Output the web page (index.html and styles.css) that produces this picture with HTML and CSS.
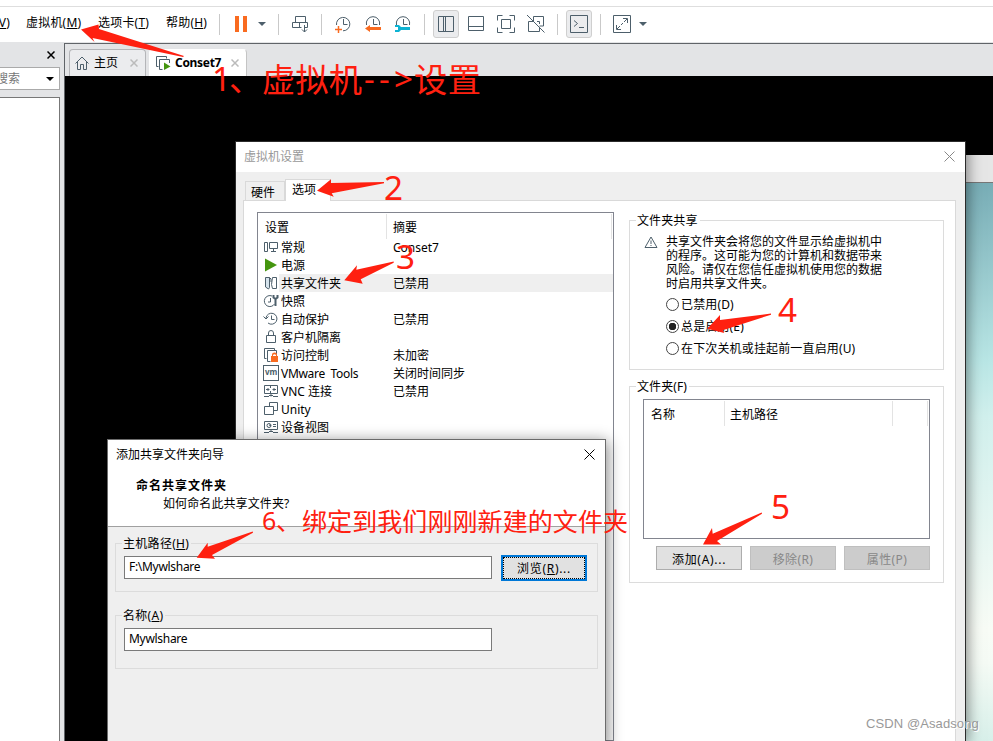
FILE: index.html
```html
<!DOCTYPE html>
<html lang="zh-CN">
<head>
    <meta charset="UTF-8">
    <meta name="viewport" content="width=device-width, initial-scale=1.0">
    <title>虚拟机设置</title>
    <link rel="stylesheet" href="styles.css">
</head>
<body>
    <div class="app">
        <div class="toolbar">
            <div class="menu">
                <span class="menu-view">(<u>V</u>)</span>
                <span class="menu-vm">虚拟机(<u>M</u>)</span>
                <span class="menu-tabs">选项卡(<u>T</u>)</span>
                <span class="menu-help">帮助(<u>H</u>)</span>
            </div>
            <div class="tools">
                <svg class="icon" viewBox="0 0 20 20"><path class="fill-orange" d="M4 2h4v16H4zM12 2h4v16h-4z"/></svg>
                <svg class="caret" viewBox="0 0 10 20"><path d="M1 8h8L5 12z"/></svg>
            </div>
            <div class="tools">
                <svg class="icon" viewBox="0 0 20 20"><path d="M5.500 8.500v-6h10v6M2.500 8.500h15v5h-3M2.500 8.500v5h9M9.500 8.500v5M14.500 11v7M12 15.500l2.500 2.500 2.500-2.500"/></svg>
            </div>
            <div class="tools">
                <svg class="icon" viewBox="0 0 20 20"><path d="M3.500 11A6.700 6.700 0 1 1 10 16.800M10.500 5v5.500h4"/><path class="orange" d="M5.500 12v7M2 15.500h7"/></svg>
                <svg class="icon" viewBox="0 0 20 20"><path d="M3.500 11A6.700 6.700 0 1 1 16.500 11M10.500 5v5.500h4"/><path class="fill-orange" d="M2 14.500l5-3.500v2h11v3H7v2z"/></svg>
                <svg class="icon" viewBox="0 0 20 20"><path d="M3.500 11A6.700 6.700 0 1 1 16.500 11M10.500 5v5.500h4"/><path class="fill-cyan" d="M2 11h4l2 2h9v3H8l-2 2H2v-2h3v-3H2z"/></svg>
            </div>
            <div class="tools tools-wide">
                <span class="pressed"><svg class="icon" viewBox="0 0 20 20"><path d="M2.500 2.500h15v15h-15zM7.500 2.500v15M9.500 2.500v15"/></svg></span>
                <svg class="icon icon-near" viewBox="0 0 20 20"><path d="M2.500 2.500h15v14h-15zM2.500 12.500h15"/></svg>
                <svg class="icon" viewBox="0 0 20 20"><path d="M1.500 6.500v-5h5M13.500 1.500h5v5M18.500 13.500v5h-5M6.500 18.500h-5v-5M5.500 5.500h9v9h-9z"/></svg>
                <svg class="icon" viewBox="0 0 20 20"><path d="M7.500 7V2.500h10v9.500h-4M2.500 7.500h5M2.500 7.500v10h11v-4M11 7.500h2.500V10M1 1l17.500 17.500"/></svg>
            </div>
            <div class="tools tools-tight">
                <span class="pressed"><svg class="icon" viewBox="0 0 20 20"><path d="M1.500 1.500h17v17h-17zM5 6.500l3.500 3L5 12.500M10 13.500h5"/></svg></span>
            </div>
            <div class="tools">
                <svg class="icon" viewBox="0 0 20 20"><path d="M1.500 1.500h17v17h-17zM5 15l3-3M9 11l2-2M12 8l3-3M11 4.500h4.500V9M9 15.500H4.500V11"/></svg>
                <svg class="caret" viewBox="0 0 10 20"><path d="M1 8h8L5 12z"/></svg>
            </div>
        </div>

        <div class="workspace">
            <div class="library">
                <div class="library-head">
                    <svg class="close-small" viewBox="0 0 8 8"><path d="M0.500 0.500l7 7M7.500 0.500l-7 7"/></svg>
                </div>
                <div class="search"><span>搜索</span><svg class="caret-black" viewBox="0 0 8 4"><path d="M0 0h8L4 4z"/></svg></div>
                <div class="tree"></div>
            </div>
            <div class="main">
                <div class="tabs">
                    <div class="tab">
                        <svg class="tab-icon" viewBox="0 0 14 14"><path d="M0.500 7.500L7 1l6.500 6.500M2.500 6v7.500h3v-5h3v5h3V6"/></svg>
                        <span class="tab-home">主页</span>
                        <svg class="tab-close" viewBox="0 0 8 8"><path d="M0.500 0.500l7 7M7.500 0.500l-7 7"/></svg>
                    </div>
                    <div class="tab tab-active">
                        <svg class="tab-icon" viewBox="0 0 14 14"><path d="M2.500 10.500h-2v-10h10v2M6.500 13.500h-3v-10h10V7"/><path class="fill-green" d="M8 6.500l6.500 4L8 14z"/></svg>
                        <span class="tab-vm">Conset7</span>
                        <svg class="tab-close" viewBox="0 0 8 8"><path d="M0.500 0.500l7 7M7.500 0.500l-7 7"/></svg>
                    </div>
                </div>
                <div class="screen"><div class="guest"></div></div>
            </div>
        </div>

        <div class="window settings">
            <div class="settings-title">
                <span>虚拟机设置</span>
                <svg class="close" viewBox="0 0 11 11"><path d="M0.500 0.500l10 10M10.500 0.500l-10 10"/></svg>
            </div>
            <div class="page-tabs">
                <span class="page-tab">硬件</span>
                <span class="page-tab page-tab-active">选项</span>
            </div>
            <div class="page">
                <div class="options">
                    <div class="options-head"><span>设置</span><span>摘要</span></div>
                    <div class="option">
                        <svg viewBox="0 0 16 16"><path d="M1.500 3.500h3v9h-3zM6.500 3.500h8v6h-8zM10.500 9.500v3M8 12.500h5"/></svg>
                        <span>常规</span><span>Conset7</span>
                    </div>
                    <div class="option">
                        <svg viewBox="0 0 16 16"><path class="fill-green" d="M2 1.500L14 8 2 14.500z"/></svg>
                        <span>电源</span><span></span>
                    </div>
                    <div class="option option-selected">
                        <svg viewBox="0 0 16 16"><path class="fill-pale" d="M2.500 2.500h4v10l-1 1.500-3-2z"/><path class="fill-white" d="M9.500 2.500h4v11h-4l-1-4z"/><path d="M6.500 2.500L8 4v3"/></svg>
                        <span>共享文件夹</span><span>已禁用</span>
                    </div>
                    <div class="option">
                        <svg viewBox="0 0 16 16"><path d="M9 3A5.500 5.500 0 1 0 11.500 11M7.500 5v4H5"/><path class="wrench-small" d="M12.500 6v7M10.500 2v2.500l2 1.500 2-1.500V2"/></svg>
                        <span>快照</span><span></span>
                    </div>
                    <div class="option">
                        <svg viewBox="0 0 16 16"><path d="M3 7A5.500 5.500 0 1 1 5 12M8.500 4.500v4h3M0.500 5.500L3 8l2.500-2.500"/></svg>
                        <span>自动保护</span><span>已禁用</span>
                    </div>
                    <div class="option">
                        <svg viewBox="0 0 16 16"><path d="M3.500 6.500h9v7h-9zM5.500 6.500V4a2.500 2.500 0 0 1 5 0v2.500"/></svg>
                        <span>客户机隔离</span><span></span>
                    </div>
                    <div class="option">
                        <svg viewBox="0 0 16 16"><path d="M3.500 11.500h-2v-10h10v2M7.500 14.500h-3v-11h9V7"/><path class="fill-orange" d="M8 9h1V7.500a2.500 2 0 0 1 5 0V9h1v6H8zM10 9h3V8q-1.500-1.500-3 0z"/></svg>
                        <span>访问控制</span><span>未加密</span>
                    </div>
                    <div class="option">
                        <span class="vm-logo">vm</span>
                        <span class="tools-name">VMware&nbsp; Tools</span><span>关闭时间同步</span>
                    </div>
                    <div class="option">
                        <svg viewBox="0 0 16 16"><path d="M1.500 2.500h13v8h-13zM8 10.500v3M1 13.500h5M10 13.500h5M6 12.500h4M3 6.500h3.500M13 6.500H9.500M5 5v3M11 5v3M7.500 3v2M7.500 8v2"/></svg>
                        <span>VNC 连接</span><span>已禁用</span>
                    </div>
                    <div class="option">
                        <svg viewBox="0 0 16 16"><path d="M6.500 5.500v-4h8v8h-4M1.500 5.500h9v8h-9z"/></svg>
                        <span>Unity</span><span></span>
                    </div>
                    <div class="option">
                        <svg viewBox="0 0 16 16"><path d="M1.500 2.500h13v8h-13zM8 10.500v2M1 13.500h5M10 13.500h5M6 12.500h4M10 5.500h3M10 7.500h3M6.500 5.500v1h1.500"/><circle cx="6" cy="6.500" r="2"/></svg>
                        <span>设备视图</span><span></span>
                    </div>
                </div>
                <div class="sharing">
                    <fieldset class="share-mode">
                        <legend>文件夹共享</legend>
                        <div class="warning">
                            <svg viewBox="0 0 14 12"><path d="M7 1l6 10.500H1zM7 4.500V8M7 9v1"/></svg>
                            <p>共享文件夹会将您的文件显示给虚拟机中<br>的程序。这可能为您的计算机和数据带来<br>风险。请仅在您信任虚拟机使用您的数据<br>时启用共享文件夹。</p>
                        </div>
                        <div class="radio"><i></i><span>已禁用(D)</span></div>
                        <div class="radio radio-on"><i></i><span>总是启用(E)</span></div>
                        <div class="radio"><i></i><span>在下次关机或挂起前一直启用(U)</span></div>
                    </fieldset>
                    <fieldset class="folders">
                        <legend>文件夹(F)</legend>
                        <div class="folder-table">
                            <span class="col-name">名称</span>
                            <span class="col-path">主机路径</span>
                            <span class="col-rest"></span>
                        </div>
                        <div class="folder-buttons">
                            <span class="button button-add">添加(A)...</span>
                            <span class="button button-disabled">移除(R)</span>
                            <span class="button button-disabled">属性(P)</span>
                        </div>
                    </fieldset>
                </div>
            </div>
        </div>

        <div class="window wizard">
            <div class="wizard-head">
                <div class="wizard-title">
                    <span>添加共享文件夹向导</span>
                    <svg class="close close-black" viewBox="0 0 11 11"><path d="M0.500 0.500l10 10M10.500 0.500l-10 10"/></svg>
                </div>
                <div class="wizard-name">命名共享文件夹</div>
                <div class="wizard-hint">如何命名此共享文件夹?</div>
            </div>
            <div class="wizard-body">
                <fieldset class="host-path">
                    <legend>主机路径(<u>H</u>)</legend>
                    <div class="field">F:\Mywlshare</div>
                    <div class="browse"><span>浏览(<u>R</u>)...</span></div>
                </fieldset>
                <fieldset class="share-name">
                    <legend>名称(<u>A</u>)</legend>
                    <div class="field">Mywlshare</div>
                </fieldset>
            </div>
        </div>

        <svg class="notes" viewBox="0 0 993 741">
            <path d="M81 29.500L98.500 24.500 99 29 184 56 183 57 92.500 38 94.500 42z"/>
            <path d="M317 190.700L331 179.300V183L384 182V183.200L331.700 193.300 333.700 196.700z"/>
            <path d="M344.300 280.300L357 265.300 356.300 269.700 393.700 261.500V262.700L360.700 279.300 362.700 283.700z"/>
            <path d="M707.300 328.700L720 315V320L771 313.500V314.700L722.700 330.300 724.300 333z"/>
            <path d="M703 544.500L712 528 712.700 533.700 761.700 512.500 762 513.700 717 541 721 544.500z"/>
            <path d="M196.700 557.700L207.700 542.700V546.700L252.700 531.500 253 532.700 212 555 215 558.700z"/>
            <g class="note-big">
                <text x="212" y="91">1</text>
                <text x="229" y="91">、</text>
                <text x="262" y="92" textLength="100">虚拟机</text>
                <text x="364" y="91" textLength="49">--&gt;</text>
                <text x="414" y="92" textLength="67">设置</text>
                <text x="384" y="199.500">2</text>
                <text x="396" y="269">3</text>
                <text x="778" y="322">4</text>
                <text x="771" y="519">5</text>
            </g>
            <g class="note-mid">
                <text x="262" y="530">6</text>
                <text x="276" y="530">、</text>
                <text x="302" y="531" textLength="326">绑定到我们刚刚新建的文件夹</text>
            </g>
        </svg>
        <div class="watermark">CSDN @Asadsong</div>
    </div>
</body>
</html>
```

FILE: styles.css
```css
* {
    box-sizing: border-box;
}

body {
    margin: 0;
    font-family: "Noto Sans", "Noto Sans CJK SC", sans-serif;
    font-size: 12px;
    line-height: 14px;
    color: #000;
    white-space: nowrap;
}

svg {
    display: block;
    flex: none;
    fill: none;
    stroke: #4d5f6b;
}

fieldset {
    margin: 0;
    min-width: 0;
    border: 1px solid #dcdcdc;
    padding: 0;
}

legend {
    margin-left: 6px;
    padding: 1px 2px 0 1px;
    height: 14px;
    letter-spacing: 0.1px;
}

.app {
    position: relative;
    display: flex;
    flex-direction: column;
    width: 993px;
    height: 741px;
    overflow: hidden;
    background: #fff;
}

.fill-orange {
    fill: #f96b20;
    stroke: none;
}

.fill-green {
    fill: #45960f;
    stroke: none;
}

.fill-cyan {
    fill: #0db3d3;
    stroke: none;
}

.fill-pale {
    fill: #d5e3ec;
}

.fill-white {
    fill: #fff;
}

.orange {
    stroke: #f96b20;
    stroke-width: 1.5;
}

.wrench-small {
    stroke-width: 2;
}

/* toolbar */
.toolbar {
    display: flex;
    align-items: center;
    flex: none;
    height: 36px;
    margin-top: 6px;
    padding-bottom: 1px;
    border-top: 1px solid #dedede;
}

.menu {
    display: flex;
    width: 219px;
    padding-bottom: 3px;
    letter-spacing: 0.2px;
}

.menu span {
    flex: none;
}

.menu-view {
    width: 26px;
    text-indent: -5px;
}

.menu-vm {
    width: 72px;
}

.menu-tabs {
    width: 68px;
}

.tools {
    display: flex;
    align-items: center;
    gap: 10px;
    padding: 0 11px;
    height: 21px;
    border-left: 1px solid #c9c9c9;
}

.tools-wide {
    padding-left: 8px;
}

.tools-tight {
    padding: 0 8px;
}

.icon {
    width: 20px;
    height: 20px;
}

.icon-near {
    margin-left: -3px;
}

.caret {
    width: 10px;
    height: 20px;
    margin-left: -4px;
    fill: #4d5f6b;
    stroke: none;
}

.pressed {
    display: flex;
    align-items: center;
    justify-content: center;
    width: 26px;
    height: 28px;
    border: 1px solid #cfcfcf;
    border-radius: 3px;
    background: #ebecee;
}

/* library and tabs */
.workspace {
    display: flex;
    flex: 1;
    background: #e3e4e6;
}

.library {
    display: flex;
    flex-direction: column;
    width: 64px;
}

.library-head {
    display: flex;
    justify-content: flex-end;
    height: 25px;
    padding: 9px 9px 0 0;
}

.close-small {
    width: 8px;
    height: 8px;
    stroke: #000;
    stroke-width: 1.5;
}

.search {
    display: flex;
    align-items: center;
    justify-content: space-between;
    width: 60px;
    height: 23px;
    padding-right: 5px;
    border: 1px solid #aaa;
    border-left: 0;
    background: #fff;
    color: #777;
}

.search span {
    margin-left: -4px;
}

.caret-black {
    width: 8px;
    height: 4px;
    fill: #000;
    stroke: none;
}

.tree {
    flex: 1;
    width: 60px;
    margin-top: 7px;
    border: 1px solid #777;
    border-width: 1px 1px 0 0;
    background: #fff;
}

.main {
    display: flex;
    flex-direction: column;
    flex: 1;
    margin-top: 1px;
    border: 1px solid #606468;
    border-width: 1px 0 0 1px;
}

.tabs {
    display: flex;
    gap: 3px;
    height: 32px;
    padding: 5px 0 0 4px;
}

.tab {
    display: flex;
    align-items: center;
    width: 77px;
    padding: 0 7px 0 5px;
    border: 1px solid #b4b5b8;
    border-bottom: 0;
    border-radius: 4px 4px 0 0;
    background: #ebecee;
}

.tab-active {
    width: 98px;
    background: #fff;
    border-color: #fff #c4c4c4 #fff #fff;
    font-weight: bold;
    letter-spacing: -0.3px;
}

.tab-icon {
    width: 14px;
    height: 14px;
    margin-right: 5px;
    overflow: visible;
}

.tab-active .tab-icon {
    margin-left: 1px;
}

.tab-close {
    width: 8px;
    height: 8px;
    margin-left: auto;
    stroke: #bbb;
    stroke-width: 1.5;
}

.screen {
    display: flex;
    justify-content: flex-end;
    flex: 1;
    padding-top: 79px;
    background: #000;
}

.guest {
    width: 40px;
    border-top: 27px solid #e6e6e6;
    background: linear-gradient(#777 1px, #78adb6 1px, #b9e6e5 32%, #d1f0ed 42%, #f8fcf6 80%, #f5fbf5 86%, #d8f0ea);
}

/* windows */
.window {
    position: absolute;
    display: flex;
    flex-direction: column;
    background: #efefef;
}

.close {
    width: 11px;
    height: 11px;
    stroke: #888;
}

.close-black {
    stroke: #000;
}

.settings {
    left: 236px;
    top: 142px;
    width: 729px;
    height: 599px;
    box-shadow: 0 0 0 1px #2b2b2b, 2px 2px 14px rgba(0, 0, 0, 0.5);
}

.settings-title {
    display: flex;
    justify-content: space-between;
    align-items: center;
    height: 30px;
    padding: 0 10px 1px 8px;
    background: #fff;
    color: #999;
}

.settings-title span {
    padding-top: 1px;
}

.page-tabs {
    display: flex;
    align-items: flex-end;
    height: 28px;
    padding-left: 9px;
}

.page-tab {
    width: 40px;
    height: 19px;
    padding: 4px 0 0 5px;
    border: 1px solid #d9d9d9;
    border-bottom: 0;
}

.page-tab-active {
    width: 46px;
    height: 22px;
    margin-bottom: -1px;
    padding: 3px 0 0 6px;
    background: #fff;
    z-index: 1;
}

.page {
    display: flex;
    gap: 15px;
    flex: 1;
    margin: 0 9px 0 7px;
    padding: 11px 0 0 13px;
    border: 1px solid #d9d9d9;
    border-bottom: 0;
    background: #fff;
}

.options {
    width: 357px;
    border: 1px solid #82858f;
}

.options-head {
    display: flex;
    height: 25px;
    margin: 1px 0 0;
}

.options-head span {
    width: 129px;
    padding: 7px 0 0 7px;
    border-right: 1px solid #e3e3e3;
}

.options-head span + span {
    width: 225px;
    padding-left: 6px;
}

.option {
    display: flex;
    align-items: center;
    height: 18px;
    padding-left: 5px;
}

.options-head + .option {
    margin-top: -1px;
}

.option span {
    padding-top: 2px;
}

.option svg,
.option .vm-logo {
    width: 16px;
    height: 16px;
    margin-right: 2px;
}

.option span:nth-child(2) {
    width: 112px;
}

.option .tools-name {
    letter-spacing: -0.3px;
}

.option-selected {
    background: linear-gradient(to right, transparent 21px, #efefef 21px);
}

.option .vm-logo {
    padding: 0;
    border: 1px solid #4d5f6b;
    color: #4d5f6b;
    font-size: 8px;
    font-weight: bold;
    line-height: 12px;
    letter-spacing: -0.3px;
    text-align: center;
}

.sharing {
    width: 315px;
    padding-top: 1px;
}

.share-mode {
    height: 157px;
}

.warning {
    display: flex;
    gap: 8px;
    padding: 8px 0 2px 14px;
}

.warning svg {
    width: 14px;
    height: 12px;
    margin-top: 1px;
}

.warning p {
    margin: 0;
}

.radio {
    display: flex;
    align-items: center;
    height: 22px;
    padding-left: 36px;
}

.radio i {
    width: 13px;
    height: 13px;
    margin-right: 2px;
    border: 1px solid #444;
    border-radius: 50%;
}

.radio span {
    padding-top: 2px;
    letter-spacing: 0.15px;
}

.radio-on i {
    background: radial-gradient(circle, #222 3.5px, #fff 4px);
}

.folders {
    height: 204px;
    margin-top: 9px;
}

.folder-table {
    display: flex;
    width: 287px;
    height: 140px;
    margin: 6px 0 0 13px;
    padding: 1px;
    border: 1px solid #82858f;
}

.folder-table span {
    height: 25px;
    padding: 7px 0 0 5px;
    border-right: 1px solid #e3e3e3;
}

.folder-table .col-name {
    width: 80px;
    padding-left: 6px;
}

.col-path {
    width: 168px;
}

.col-rest {
    flex: 1;
}

.folder-buttons {
    display: flex;
    gap: 8px;
    margin: 7px 0 0 26px;
}

.button {
    width: 86px;
    height: 24px;
    padding-top: 1px;
    border: 1px solid #adadad;
    background: #e1e1e1;
    line-height: 23px;
    text-align: center;
}

.button-add,
.browse {
    letter-spacing: 0.7px;
}

.button-disabled {
    border-color: #bfbfbf;
    background: #ccc;
    color: #888;
    letter-spacing: 0.4px;
}

/* wizard */
.wizard {
    left: 107px;
    top: 439px;
    width: 499px;
    height: 310px;
    border: 1px solid #6b6b6b;
    box-shadow: 2px 2px 14px rgba(0, 0, 0, 0.45);
}

.wizard-head {
    height: 87px;
    border-bottom: 1px solid #a0a0a0;
    background: #fff;
}

.wizard-title {
    display: flex;
    justify-content: space-between;
    align-items: center;
    height: 28px;
    padding: 0 10px 0 8px;
}

.wizard-title span {
    padding-top: 2px;
}

.wizard-name {
    margin: 11px 0 0 28px;
    font-weight: bold;
    letter-spacing: 1px;
}

.wizard-hint {
    margin: 4px 0 0 55px;
    letter-spacing: 0.1px;
}

.wizard-body {
    padding: 9px 7px 0;
}

.host-path {
    display: flex;
    height: 56px;
}

.share-name {
    height: 61px;
    margin-top: 16px;
}

.wizard legend {
    letter-spacing: 0.3px;
}

.field {
    width: 368px;
    height: 23px;
    margin: 6px 0 0 8px;
    padding: 3px 4px;
    border: 1px solid #7a7a7a;
    background: #fff;
    letter-spacing: -0.3px;
}

.browse {
    width: 86px;
    height: 26px;
    margin: 5px 0 0 9px;
    border: 2px solid #0078d7;
    background: #e1e1e1;
    text-align: center;
}

.browse span {
    display: block;
    height: 22px;
    border: 1px dotted #000;
    line-height: 22px;
}

/* arrows and step notes */
.notes {
    position: absolute;
    left: 0;
    top: 0;
    z-index: 2;
    width: 993px;
    height: 741px;
    fill: #ff2010;
    stroke: none;
}

.note-big {
    font-size: 33.3px;
}

.note-mid {
    font-size: 25px;
}

.watermark {
    position: absolute;
    left: 866px;
    top: 716px;
    color: #999;
    font-family: "Liberation Sans", Arial, sans-serif;
    font-size: 13px;
    letter-spacing: 0.1px;
    line-height: 16px;
    text-shadow: 1px 1px 0 #fff;
}
```
